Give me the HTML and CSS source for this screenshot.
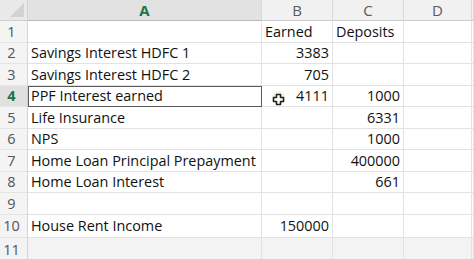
FILE: index.html
```html
<!DOCTYPE html>
<html lang="en">
<head>
  <meta charset="UTF-8">
  <title>Income Sheet</title>
  <link rel="stylesheet" href="styles.css">
</head>
<body>
  <div class="sheet">
    <div class="corner"><span class="tri"></span></div>
    <div class="colhead sel">A</div>
    <div class="colhead">B</div>
    <div class="colhead">C</div>
    <div class="colhead">D</div>
    <div class="colhead edge"></div>

    <div class="rowhead">1</div><div class="cell"></div><div class="cell">Earned</div><div class="cell">Deposits</div><div class="cell"></div><div class="cell edge"></div>
    <div class="rowhead">2</div><div class="cell">Savings Interest HDFC 1</div><div class="cell num">3383</div><div class="cell"></div><div class="cell"></div><div class="cell edge"></div>
    <div class="rowhead">3</div><div class="cell">Savings Interest HDFC 2</div><div class="cell num">705</div><div class="cell"></div><div class="cell"></div><div class="cell edge"></div>
    <div class="rowhead sel">4</div><div class="cell active">PPF Interest earned</div><div class="cell num">4111<span class="cursor">
      <svg width="13" height="13" viewBox="0 0 13 13"><path d="M4.5 1.5h4v3h3v4h-3v3h-4v-3h-3v-4h3z" fill="#fff" stroke="#222" stroke-width="1.6" stroke-linejoin="round"/></svg>
    </span></div><div class="cell num">1000</div><div class="cell"></div><div class="cell edge"></div>
    <div class="rowhead">5</div><div class="cell">Life Insurance</div><div class="cell"></div><div class="cell num">6331</div><div class="cell"></div><div class="cell edge"></div>
    <div class="rowhead">6</div><div class="cell">NPS</div><div class="cell"></div><div class="cell num">1000</div><div class="cell"></div><div class="cell edge"></div>
    <div class="rowhead">7</div><div class="cell clip">Home Loan Principal Prepayment</div><div class="cell"></div><div class="cell num">400000</div><div class="cell"></div><div class="cell edge"></div>
    <div class="rowhead">8</div><div class="cell">Home Loan Interest</div><div class="cell"></div><div class="cell num">661</div><div class="cell"></div><div class="cell edge"></div>
    <div class="rowhead">9</div><div class="cell"></div><div class="cell"></div><div class="cell"></div><div class="cell"></div><div class="cell edge"></div>
    <div class="rowhead">10</div><div class="cell">House Rent Income</div><div class="cell num">150000</div><div class="cell"></div><div class="cell"></div><div class="cell edge"></div>
    <div class="rowhead last">11</div><div class="cell last"></div><div class="cell last"></div><div class="cell last"></div><div class="cell last"></div><div class="cell last edge"></div>
  </div>
</body>
</html>
```

FILE: styles.css
```css
body {
  margin: 0;
  background: #fff;
  font-family: "Open Sans", "Liberation Sans", sans-serif;
  color: #111;
  overflow: hidden;
}

/* Spreadsheet grid */
.sheet {
  display: grid;
  grid-template-columns: 28px 234px 71px 71px 68px 2px;
  grid-template-rows: 21px repeat(9, 21.5px) 23px 25px;
  width: 474px;
  height: 259px;
}

.corner {
  background: #e9e9e9;
  border-right: 1px solid #d4d4d4;
  border-bottom: 1px solid #cfcfcf;
  position: relative;
}

.corner .tri {
  position: absolute;
  right: 3px;
  bottom: 3px;
  width: 0;
  height: 0;
  border-left: 14px solid transparent;
  border-bottom: 14px solid #d2d2d2;
}

.colhead {
  background: #f1f1f1;
  color: #5a5a5a;
  font-size: 15px;
  display: flex;
  align-items: center;
  justify-content: center;
  border-right: 1px solid #dadada;
  border-bottom: 1px solid #cdcdcd;
}

.colhead.sel {
  background: #e2e2e2;
  color: #217346;
  font-weight: 700;
  border-bottom: 1px solid #b8b8b8;
}

.rowhead {
  background: #f4f4f4;
  color: #555;
  font-size: 14.5px;
  display: flex;
  align-items: center;
  justify-content: center;
  padding-right: 4px;
  border-right: 1px solid #d4d4d4;
  border-bottom: 1px solid #e4e4e4;
}

.rowhead.sel {
  background: #e0e0e0;
  color: #217346;
  font-weight: 700;
}

.cell {
  font-size: 14.4px;
  display: flex;
  align-items: center;
  padding: 0 3px;
  white-space: nowrap;
  border-right: 1px solid #e2e2e2;
  border-bottom: 1px solid #e2e2e2;
  position: relative;
}

.cell.clip {
  overflow: visible;
  z-index: 1;
}

.cell.num {
  justify-content: flex-end;
}

.cell.active {
  outline: 1.5px solid #5b5b5b;
  outline-offset: -1px;
}

.cell.edge {
  padding: 0;
}

.cell.last,
.rowhead.last {
  background: #f3f3f3;
}

.cursor {
  position: absolute;
  left: 10px;
  top: 5px;
  width: 13px;
  height: 13px;
  border-radius: 50%;
  background: #f6f3dc;
}
```
